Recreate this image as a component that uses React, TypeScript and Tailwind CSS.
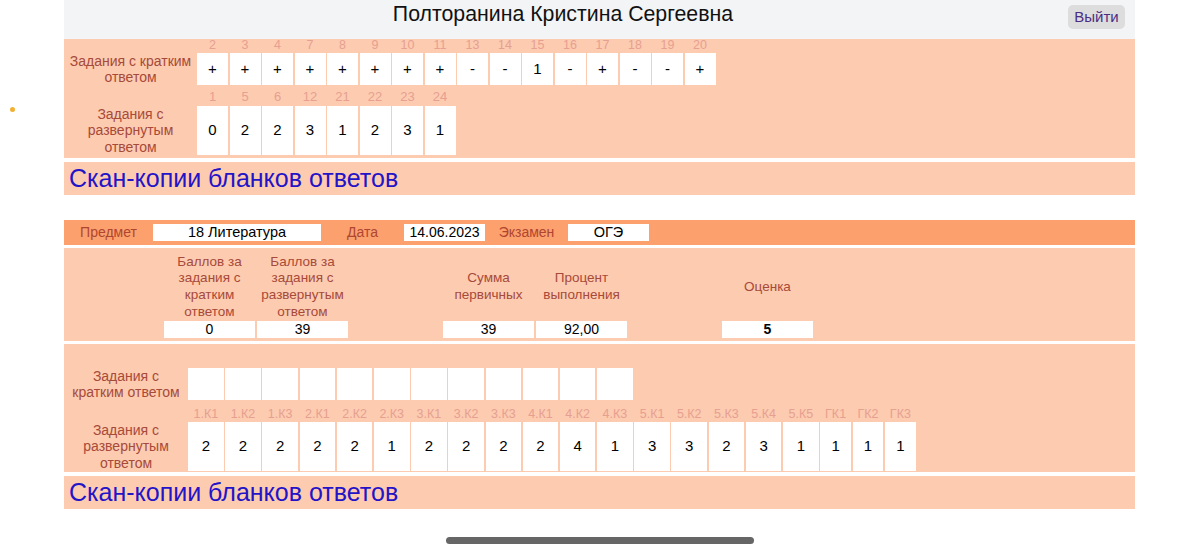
const shortNums = ['2', '3', '4', '7', '8', '9', '10', '11', '13', '14', '15', '16', '17', '18', '19', '20']
const shortVals = ['+', '+', '+', '+', '+', '+', '+', '+', '-', '-', '1', '-', '+', '-', '-', '+']
const longNums = ['1', '5', '6', '12', '21', '22', '23', '24']
const longVals = ['0', '2', '2', '3', '1', '2', '3', '1']

const critNames = [
  '1.К1', '1.К2', '1.К3', '2.К1', '2.К2', '2.К3', '3.К1', '3.К2', '3.К3', '4.К1',
  '4.К2', '4.К3', '5.К1', '5.К2', '5.К3', '5.К4', '5.К5', 'ГК1', 'ГК2', 'ГК3',
]
const critVals = ['2', '2', '2', '2', '2', '1', '2', '2', '2', '2', '4', '1', '3', '3', '2', '3', '1', '1', '1', '1']

const scores = [
  { lines: ['Баллов за', 'задания с', 'кратким', 'ответом'], value: '0' },
  { lines: ['Баллов за', 'задания с', 'развернутым', 'ответом'], value: '39' },
  null,
  { lines: ['Сумма', 'первичных'], value: '39' },
  { lines: ['Процент', 'выполнения'], value: '92,00' },
  null,
  { lines: ['Оценка'], value: '5', bold: true },
]

const Label = ({ lines, className }: { lines: string[]; className: string }) => (
  <div className={`flex shrink-0 flex-col items-center justify-center text-[14px] leading-[16.5px] text-[#a64a3a] ${className}`}>
    {lines.map((l) => (
      <span key={l}>{l}</span>
    ))}
  </div>
)

const ScanLink = () => (
  <div className="mt-[4px] flex h-[33px] items-center bg-[#fdcbb0] pl-[5px]">
    <a href="#" className="text-[25px] leading-none text-[#2414c8]">
      Скан-копии бланков ответов
    </a>
  </div>
)

const App = () => {
  return (
    <div className="relative h-[555px] w-[1200px] overflow-hidden bg-white font-['Liberation_Sans',Arial,sans-serif] text-black">
      <div className="absolute left-[10px] top-[107px] h-[5px] w-[5px] rounded-full bg-[#f2b134]" />

      <div className="ml-[64px] flex w-[1071px] flex-col">
        {/* header */}
        <div className="flex h-[39px] items-start bg-[#f3f4f5]">
          <div className="flex-1 pr-[6px] text-center text-[21.3px] leading-[28px] text-[#111]">Полторанина Кристина Сергеевна</div>
          <button className="mr-[10px] mt-[5px] h-[24px] w-[57px] rounded-[5px] bg-[#dddddd] text-[15px] text-[#4c2c84]">
            Выйти
          </button>
        </div>

        {/* first exam results */}
        <div className="bg-[#fdcbb0] pb-[3px]">
          <div className="flex h-[14px]">
            <div className="w-[133px] shrink-0" />
            <div className="flex gap-[1.5px]">
              {shortNums.map((n) => (
                <div key={n} className="w-[31px] text-center text-[12.5px] leading-[12px] text-[#e6a091]">
                  {n}
                </div>
              ))}
            </div>
          </div>
          <div className="flex h-[32px]">
            <Label lines={['Задания с кратким', 'ответом']} className="w-[133px]" />
            <div className="flex gap-[1.5px]">
              {shortVals.map((v, i) => (
                <div key={i} className="flex h-[32px] w-[31px] items-center justify-center bg-white text-[15px]">
                  {v}
                </div>
              ))}
            </div>
          </div>
          <div className="flex h-[21px]">
            <div className="w-[133px] shrink-0" />
            <div className="flex gap-[1.5px]">
              {longNums.map((n) => (
                <div key={n} className="w-[31px] pt-[5px] text-center text-[13px] leading-[13px] text-[#e6a091]">
                  {n}
                </div>
              ))}
            </div>
          </div>
          <div className="flex h-[49px]">
            <Label lines={['Задания с', 'развернутым', 'ответом']} className="w-[133px]" />
            <div className="flex gap-[1.5px]">
              {longVals.map((v, i) => (
                <div key={i} className="flex h-[49px] w-[31px] items-center justify-center bg-white text-[15px]">
                  {v}
                </div>
              ))}
            </div>
          </div>
        </div>
        <ScanLink />

        {/* second exam */}
        <div className="mt-[25px] flex h-[25px] items-center bg-[#fca06e] text-[14px]">
          <div className="w-[89px] text-center text-[#b0462f]">Предмет</div>
          <div className="h-[17px] w-[168px] bg-white text-center text-[14.5px] leading-[17px]">18 Литература</div>
          <div className="w-[83px] text-center text-[#b0462f]">Дата</div>
          <div className="h-[17px] w-[81px] bg-white text-center leading-[17px]">14.06.2023</div>
          <div className="w-[83px] text-center text-[#b0462f]">Экзамен</div>
          <div className="h-[17px] w-[81px] bg-white text-center text-[14.5px] leading-[17px]">ОГЭ</div>
        </div>

        <div className="mt-[3px] flex bg-[#fdcbb0] pb-[3px] pl-[100px] pt-[6px]">
          <div className="grid grid-cols-[repeat(7,91px)] gap-x-[2px]">
            {scores.map((s, i) =>
              s ? (
                <div key={i} className="flex flex-col">
                  <div className="flex h-[66px] flex-col items-center justify-center text-[13.5px] leading-[16.6px] text-[#a64a3a]">
                    {s.lines.map((l) => (
                      <span key={l}>{l}</span>
                    ))}
                  </div>
                  <div className={`mt-[1px] h-[17px] bg-white text-center text-[14px] leading-[17px] ${s.bold ? 'font-bold' : ''}`}>
                    {s.value}
                  </div>
                </div>
              ) : (
                <div key={i} />
              ),
            )}
          </div>
        </div>

        <div className="mt-[3px] bg-[#fdcbb0] pb-[1px] pt-[24px]">
          <div className="flex h-[32px]">
            <Label lines={['Задания с', 'кратким ответом']} className="w-[124px]" />
            <div className="flex gap-[1.6px]">
              {Array.from({ length: 12 }).map((_, i) => (
                <div key={i} className="h-[32px] w-[35.6px] bg-white" />
              ))}
            </div>
          </div>
          <div className="flex h-[22px]">
            <div className="w-[124px] shrink-0" />
            <div className="flex gap-[1.6px]">
              {critNames.map((n) => (
                <div
                  key={n}
                  className={`${n.startsWith('Г') ? 'w-[30.8px]' : 'w-[35.6px]'} whitespace-nowrap pt-[8px] text-center text-[12.5px] leading-[13px] text-[#e6a091]`}
                >
                  {n}
                </div>
              ))}
            </div>
          </div>
          <div className="flex h-[49px]">
            <Label lines={['Задания с', 'развернутым', 'ответом']} className="w-[124px]" />
            <div className="flex gap-[1.6px]">
              {critVals.map((v, i) => (
                <div
                  key={i}
                  className={`${critNames[i].startsWith('Г') ? 'w-[30.8px]' : 'w-[35.6px]'} flex h-[49px] items-center justify-center bg-white text-[15px]`}
                >
                  {v}
                </div>
              ))}
            </div>
          </div>
        </div>
        <ScanLink />
      </div>

      <div className="absolute left-[446px] top-[537px] h-[7px] w-[308px] rounded-full bg-[#666666]" />
    </div>
  )
}

export default App
